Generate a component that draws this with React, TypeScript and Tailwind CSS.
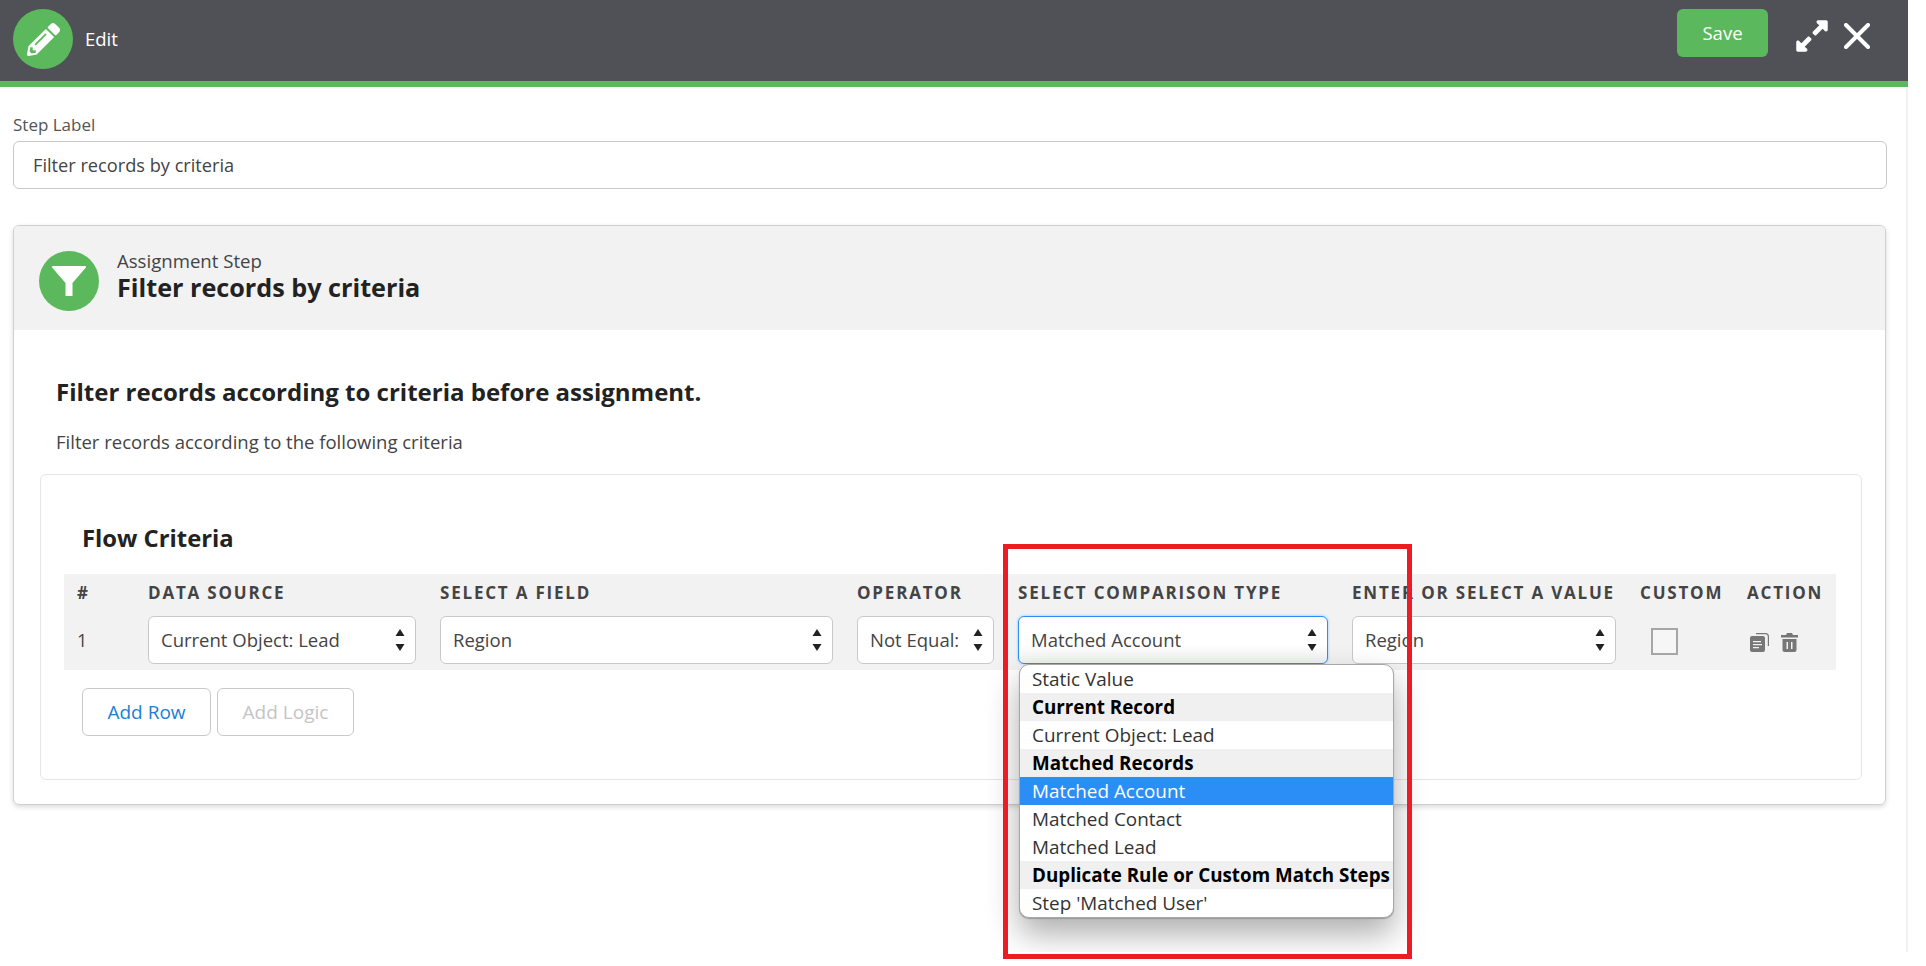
import type { ReactNode } from "react";
import { FaExpandAlt, FaPencilAlt } from "react-icons/fa";

function Arrows() {
  return (
    <svg width="10" height="24" viewBox="0 0 10 24" className="shrink-0 text-[#222]" fill="currentColor">
      <path d="M5 1 9.500 8H.5z" />
      <path d="M5 23 .5 16h9z" />
    </svg>
  );
}

function SelectBox({ value, focused }: { value: string; focused?: boolean }) {
  return (
    <div
      className={
        focused
          ? "flex h-[48px] items-center justify-between gap-[13px] rounded-md border border-[#2a8ef6] bg-gradient-to-b from-white from-60% to-[#f1f1f1] pl-[12px] pr-[10px] shadow-[0_0_3px_#8cc4fb]"
          : "flex h-[48px] items-center justify-between gap-[13px] rounded-md border border-[#c9c9c9] bg-white pl-[12px] pr-[10px]"
      }
    >
      <span className="min-w-0 overflow-hidden whitespace-nowrap text-[18.500px] text-[#444]">{value}</span>
      <Arrows />
    </div>
  );
}

function Th({ children }: { children: ReactNode }) {
  return <div className="whitespace-nowrap text-[17px] font-bold leading-[24px] tracking-[1.8px] text-[#444]">{children}</div>;
}

const options = [
  { label: "Static Value" },
  { label: "Current Record", group: true },
  { label: "Current Object: Lead" },
  { label: "Matched Records", group: true },
  { label: "Matched Account", active: true },
  { label: "Matched Contact" },
  { label: "Matched Lead" },
  { label: "Duplicate Rule or Custom Match Steps", group: true },
  { label: "Step 'Matched User'" },
];

function optionClass(o: { group?: boolean; active?: boolean }) {
  if (o.group) return "h-[28px] whitespace-nowrap bg-[#f0f0f0] pl-[12px] text-[18.800px] font-bold leading-[28px] text-black";
  if (o.active) return "h-[28px] whitespace-nowrap bg-[#2a8ef6] pl-[12px] text-[18.900px] leading-[28px] text-white";
  return "h-[28px] whitespace-nowrap pl-[12px] text-[18.900px] leading-[28px] text-[#333]";
}

export default function App() {
  return (
    <div className="relative h-[966px] w-[1926px] overflow-hidden bg-white font-['Open_Sans',sans-serif] text-[#333]">
      <div className="relative h-[952px] w-[1908px] overflow-hidden">
        <header className="flex h-[87px] items-start border-b-[6px] border-[#5cb85c] bg-[#505156] pl-[13px] pr-[38px] pt-[9px] text-white">
          <div className="flex h-[60px] w-[60px] items-center justify-center rounded-full bg-[#5cb85c]">
            <FaPencilAlt className="text-[33px]" />
          </div>
          <span className="ml-[12px] mt-[16px] text-[18.500px]">Edit</span>
          <button className="ml-auto h-[48px] w-[91px] rounded-md bg-[#5cb85c] text-[18.500px] text-white">Save</button>
          <FaExpandAlt className="ml-[26px] mt-[9px] text-[36px]" />
          <svg width="26" height="26" viewBox="0 0 26 26" className="ml-[14px] mt-[14px]" stroke="currentColor" strokeWidth="4" strokeLinecap="round">
            <path d="M2 2l22 22M24 2 2 24" />
          </svg>
        </header>

        <div className="h-[865px] border-r-2 border-[#f2f2f2] pl-[13px] pt-[26px]">
          <label className="block text-[17px] leading-[24px] text-[#555]">Step Label</label>
          <div className="mt-[4px] flex h-[48px] w-[1874px] items-center rounded-md border border-[#c9c9c9] pl-[19px] pt-[2px] text-[18.200px] text-[#444]">
            Filter records by criteria
          </div>

          <section className="mt-[36px] h-[580px] w-[1873px] rounded-md border border-[#d0d0d0] shadow-[0_2px_5px_rgba(0,0,0,0.15)]">
            <div className="flex h-[104px] items-start rounded-t-md bg-[#f2f2f2] pl-[25px] pt-[23px]">
              <div className="mt-[2px] flex h-[60px] w-[60px] items-center justify-center rounded-full bg-[#5cb85c]">
                <svg width="34" height="30" viewBox="0 0 34 30" fill="white">
                  <path d="M1 0h32c1 0 1.300 1 .7 1.800L20.500 17v13h-7V17L.3 1.800C-.3 1 0 0 1 0z" />
                </svg>
              </div>
              <div className="ml-[18px]">
                <div className="text-[18.600px] leading-[24px] text-[#444]">Assignment Step</div>
                <div className="text-[25.200px] font-bold leading-[28px] text-[#222]">Filter records by criteria</div>
              </div>
            </div>

            <div className="pl-[26px] pr-[25px] pt-[46px]">
              <h2 className="pl-[16px] text-[24px] font-bold leading-[32px] text-[#222]">
                Filter records according to criteria before assignment.
              </h2>
              <p className="mt-[21px] pl-[16px] text-[18.500px] leading-[26px] text-[#444]">
                Filter records according to the following criteria
              </p>

              <div className="mt-[19px] h-[306px] w-[1822px] rounded-md border border-[#e6e6e6] pl-[23px] pt-[47px]">
                <h3 className="pl-[18px] text-[23.800px] font-bold leading-[32px] text-[#222]">Flow Criteria</h3>

                <div className="mt-[20px] h-[96px] w-[1772px] bg-[#f2f2f2] pl-[13px] pr-[14px] pt-[7px]">
                  <div className="grid grid-cols-[47px_268px_393px_137px_310px_264px_83px_75px] items-center gap-x-[24px] gap-y-[11px]">
                    <Th>#</Th>
                    <Th>DATA SOURCE</Th>
                    <Th>SELECT A FIELD</Th>
                    <Th>OPERATOR</Th>
                    <Th>SELECT COMPARISON TYPE</Th>
                    <Th>ENTER OR SELECT A VALUE</Th>
                    <Th>CUSTOM</Th>
                    <Th>ACTION</Th>

                    <div className="text-[18px] text-[#444]">1</div>
                    <SelectBox value="Current Object: Lead" />
                    <SelectBox value="Region" />
                    <SelectBox value="Not Equal:" />
                    <SelectBox value="Matched Account" focused />
                    <SelectBox value="Region" />
                    <div className="pl-[11px] pt-[3px]">
                      <div className="h-[27px] w-[27px] border-[2px] border-[#a6a6a6] bg-[#f6f6f6]" />
                    </div>
                    <div className="flex items-center gap-[12px] pl-[3px] pt-[4px]">
                      <svg width="19" height="19" viewBox="0 0 19 19" fill="#777">
                        <path d="M6 0h9.500A3.500 3.500 0 0 1 19 3.500V13h-1.200V3.500a2.300 2.300 0 0 0-2.300-2.300H6z" />
                        <path d="M2 3h11a2 2 0 0 1 2 2v12a2 2 0 0 1-2 2H2a2 2 0 0 1-2-2V5a2 2 0 0 1 2-2z" />
                        <path d="M3 8h8v1.300H3zM3 11h9v1.300H3zM3 14h6v1.300H3z" fill="#f2f2f2" />
                      </svg>
                      <svg width="17" height="19" viewBox="0 0 17 19" fill="#777">
                        <path d="M6 0h5l1 2h5v2.500H0V2h5z" />
                        <path d="M1.500 6h14v11a2 2 0 0 1-2 2h-10a2 2 0 0 1-2-2z" />
                        <path d="M5.500 9h1.500v7H5.500zM10 9h1.500v7H10z" fill="#f2f2f2" />
                      </svg>
                    </div>
                  </div>
                </div>

                <div className="mt-[18px] flex gap-[6px] pl-[18px]">
                  <button className="h-[48px] w-[129px] rounded-md border border-[#c9c9c9] bg-white text-[19px] text-[#1b7fd6]">Add Row</button>
                  <button className="h-[48px] w-[137px] rounded-md border border-[#c9c9c9] bg-white text-[19px] text-[#c4c4c4]">Add Logic</button>
                </div>
              </div>
            </div>
          </section>
        </div>

        {/* open dropdown of the comparison type select */}
        <div className="absolute left-[1019px] top-[664px] w-[375px] overflow-hidden rounded-[10px] border border-[#a8a8a8] bg-white shadow-[0_1px_1px_#999,0_16px_32px_rgba(0,0,0,0.32)]">
          {options.map((o) => (
            <div key={o.label} className={optionClass(o)}>
              {o.label}
            </div>
          ))}
        </div>
      </div>

      {/* red annotation frame */}
      <div className="absolute left-[1003px] top-[544px] h-[415px] w-[409px] border-[5px] border-[#ed1c24]" />
    </div>
  );
}
